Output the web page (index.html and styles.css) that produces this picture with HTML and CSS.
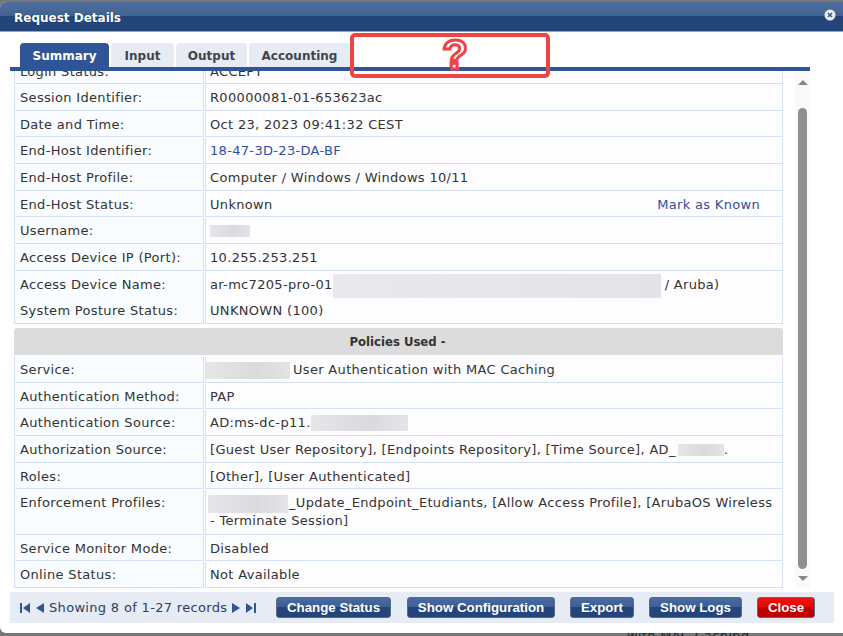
FILE: index.html
```html
<!DOCTYPE html>
<html lang="en">
<head>
<meta charset="utf-8">
<title>Request Details</title>
<link rel="stylesheet" href="styles.css">
</head>
<body>
<div class="modal">
  <header class="titlebar">
    <span class="title">Request Details</span>
    <svg class="close-x" width="12" height="12" viewBox="0 0 12 12"><circle cx="6" cy="6" r="5.5" fill="#e8edf3"/><path d="M4 4l4 4M8 4l-4 4" stroke="#4a5a70" stroke-width="1.6"/></svg>
  </header>
  <nav class="tabs">
    <span class="tab active">Summary</span>
    <span class="tab tab-input">Input</span>
    <span class="tab tab-output">Output</span>
    <span class="tab tab-acct">Accounting</span>
  </nav>
  <div class="content">
    <div class="scroller">
      <div class="rows">
        <div class="row"><div class="k">Login Status:</div><div class="v">ACCEPT</div></div>
        <div class="row"><div class="k">Session Identifier:</div><div class="v">R00000081-01-653623ac</div></div>
        <div class="row"><div class="k">Date and Time:</div><div class="v">Oct 23, 2023 09:41:32 CEST</div></div>
        <div class="row"><div class="k">End-Host Identifier:</div><div class="v"><a class="link">18-47-3D-23-DA-BF</a></div></div>
        <div class="row"><div class="k">End-Host Profile:</div><div class="v">Computer / Windows / Windows 10/11</div></div>
        <div class="row"><div class="k">End-Host Status:</div><div class="v split"><span>Unknown</span><a class="link mark">Mark as Known</a></div></div>
        <div class="row"><div class="k">Username:</div><div class="v"><span class="blur b-user"></span></div></div>
        <div class="row"><div class="k">Access Device IP (Port):</div><div class="v">10.255.253.251</div></div>
        <div class="row"><div class="k">Access Device Name:</div><div class="v">ar-mc7205-pro-01<span class="blur b-dev"></span>/ Aruba)</div></div>
        <div class="row"><div class="k">System Posture Status:</div><div class="v">UNKNOWN (100)</div></div>
        <div class="section">Policies Used -</div>
        <div class="row"><div class="k">Service:</div><div class="v"><span class="blur b-svc"></span>User Authentication with MAC Caching</div></div>
        <div class="row"><div class="k">Authentication Method:</div><div class="v">PAP</div></div>
        <div class="row"><div class="k">Authentication Source:</div><div class="v">AD:ms-dc-p11.<span class="blur b-src"></span></div></div>
        <div class="row"><div class="k">Authorization Source:</div><div class="v">[Guest User Repository], [Endpoints Repository], [Time Source], AD_<span class="blur b-az"></span>.</div></div>
        <div class="row"><div class="k">Roles:</div><div class="v">[Other], [User Authenticated]</div></div>
        <div class="row tall"><div class="k">Enforcement Profiles:</div><div class="v"><span class="blur b-enf"></span>_Update_Endpoint_Etudiants, [Allow Access Profile], [ArubaOS Wireless<br>- Terminate Session]</div></div>
        <div class="row"><div class="k">Service Monitor Mode:</div><div class="v">Disabled</div></div>
        <div class="row"><div class="k">Online Status:</div><div class="v">Not Available</div></div>
      </div>
    </div>
    <div class="scrollbar">
      <span class="arrow up"></span>
      <span class="thumb"></span>
      <span class="arrow down"></span>
    </div>
  </div>
  <footer class="actions">
    <div class="pager">
      <svg width="10" height="10" viewBox="0 0 10 10"><path d="M0 0h2v10H0zM10 0v10L3 5z" fill="#2f5597"/></svg>
      <svg class="pg-prev" width="8" height="10" viewBox="0 0 8 10"><path d="M8 0v10L0 5z" fill="#2f5597"/></svg>
      <span class="pg-text">Showing 8 of 1-27 records</span>
      <svg class="pg-next" width="8" height="10" viewBox="0 0 8 10"><path d="M0 0v10l8-5z" fill="#2f5597"/></svg>
      <svg width="10" height="10" viewBox="0 0 10 10"><path d="M8 0h2v10H8zM0 0v10l7-5z" fill="#2f5597"/></svg>
    </div>
    <div class="buttons">
      <button class="btn b1">Change Status</button>
      <button class="btn b2">Show Configuration</button>
      <button class="btn b3">Export</button>
      <button class="btn b4">Show Logs</button>
      <button class="btn red">Close</button>
    </div>
  </footer>
  <div class="note"><span class="qm">?</span></div>
</div>
<div class="under">with MAC Caching</div>
</body>
</html>
```
FILE: styles.css
```css
* { box-sizing: border-box; }
html, body { margin: 0; height: 636px; overflow: hidden; }
body { background: #777; font-family: "DejaVu Sans", sans-serif; font-size: 13px; letter-spacing: .32px; color: #333; position: relative; padding-top: 2px; }
.modal { position: relative; z-index: 1; width: 843px; height: 631px; background: #fff; border-radius: 6px 0 0 6px; overflow: hidden; }
.titlebar { height: 30px; display: flex; align-items: center; justify-content: space-between; padding: 0 7px 0 14px; background: linear-gradient(#4f709f 0, #41628f 50%, #24457a 50%, #24457a 100%); border-bottom: 1px solid #8ea6c8; }
.title { color: #fff; font-weight: bold; font-size: 12px; letter-spacing: 0; padding-top: 2px; text-shadow: 0 0 1px #1a2f55; }
.close-x { margin-bottom: 4px; }
.tabs { height: 39px; margin: 0 33px 0 10px; padding: 11px 0 0 10px; display: flex; gap: 2px; border-bottom: 4px solid #2f5597; width: 800px; }
.tab { height: 24px; padding-top: 1px; background: #e6ebf4; border-radius: 4px 4px 0 0; font-weight: bold; font-size: 12px; letter-spacing: 0; color: #444; display: flex; align-items: center; justify-content: center; width: 63px; }
.tab.active { background: #2f5597; color: #fff; width: 89px; }
.tab-output { width: 71px; }
.tab-acct { width: 101px; }
.content { display: flex; width: 800px; margin-left: 10px; height: 517px; }
.scroller { flex: 1; overflow: hidden; padding: 0 0 0 4px; }
.rows { width: 769px; margin-top: -12.5px; }
.row { display: grid; grid-template-columns: 190px 1fr; gap: 1px; height: 26.67px; padding-bottom: 1px; }
.row.tall { height: 45.5px; }
.k, .v { border: 1px solid #d3e0f7; border-width: 0 1px 1px 1px; padding-top: 5px; padding-left: 5px; line-height: 16px; white-space: nowrap; }
.k { background: #f9fdff; }
.v { background: #fdfdff; padding-left: 4px; }
.split { display: flex; justify-content: space-between; padding-right: 22px; }
.link { color: #2f4f9f; }
.section { height: 27px; margin: 2.5px 0 2.4px; background: #dcdcdc; text-align: center; font-weight: bold; font-size: 11.7px; letter-spacing: 0; line-height: 29px; padding-right: 2px; border-radius: 3px 3px 0 0; }
.blur { display: inline-block; height: 16px; vertical-align: top; background: linear-gradient(90deg, #e6e6e8, #dadadc 60%, #e4e4e6); }
.b-user { width: 40px; height: 12px; margin-top: 2px; }
.b-dev { width: 328px; height: 24px; margin: -3px 4px 0 0; background: linear-gradient(90deg, #e9e9eb, #e4e4e6); }
.b-svc { width: 84px; height: 17px; margin: 0 3px 0 -4px; }
.b-src { width: 97px; height: 16px; }
.b-az { width: 46px; height: 12px; margin: 2px 0 0 2px; }
.b-enf { width: 80px; height: 18px; margin: 0 1px 0 -2px; }
.scrollbar { width: 15px; margin-left: 12px; background: #fafafa; display: flex; flex-direction: column; align-items: center; position: relative; padding: 9px 0 4px; }
.arrow { width: 0; height: 0; border-left: 5px solid transparent; border-right: 5px solid transparent; }
.arrow.up { border-bottom: 5px solid #888; }
.arrow.down { border-top: 5px solid #888; }
.thumb { width: 9px; height: 461px; background: #8f8f8f; border-radius: 5px; margin: 23px 0 7px; }
.actions { width: 824px; height: 31px; margin: 4px 0 0 10px; background: #e6ebf4; display: flex; align-items: center; justify-content: space-between; padding: 0 19px 0 10px; }
.pager { display: flex; align-items: center; color: #2b3f66; gap: 6px; }
.pg-text { margin: 0 -1px; }
.buttons { display: flex; gap: 15px; }
.btn { height: 21px; padding: 0; border: 1px solid #5a6a80; border-radius: 3px; background: linear-gradient(#4a6b9f 0, #3d5e92 50%, #24457a 50%, #24457a 100%); color: #fff; font: bold 13.3px/18px "Liberation Sans", sans-serif; letter-spacing: 0; }
.b1 { width: 115px; margin-right: 1px; }
.b2 { width: 148px; }
.b3 { width: 64px; }
.b4 { width: 93px; }
.red { width: 58px; background: linear-gradient(#ee1111 0, #e80505 50%, #c00000 50%, #c00000 100%); }
.note { position: absolute; left: 350px; top: 31px; width: 200px; height: 45px; border: 4px solid #ee4444; border-radius: 5px; display: flex; justify-content: center; align-items: center; }
.qm { font: bold 42px/1 "Liberation Sans", sans-serif; letter-spacing: 0; color: #fff; -webkit-text-stroke: 3px #ee4444; padding: 0 0 0 10px; margin-top: -2px; }
.under { position: absolute; left: 627px; top: 628px; color: #222; }
```
